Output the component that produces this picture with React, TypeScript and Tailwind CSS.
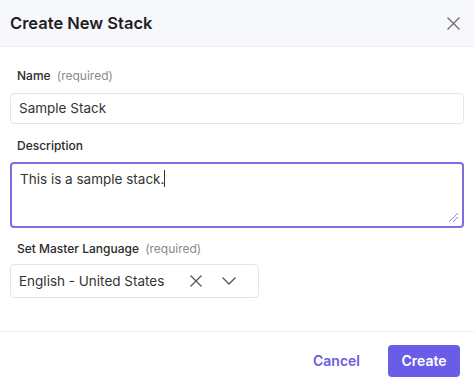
export default function App() {
  return (
    <div className="flex h-[389px] w-[474px] flex-col bg-white font-['Inter',sans-serif] text-[#222]">
      <header className="flex h-[47px] items-center justify-between border-b border-[#eef0f4] bg-[#f6f8fc] pl-[10px] pr-[14px]">
        <h1 className="text-[16.5px] font-semibold text-[#1f1f1f]">Create New Stack</h1>
        <svg className="h-[13px] w-[13px] text-[#6b6b6b]" viewBox="0 0 13 13" fill="none" stroke="currentColor" strokeWidth="1.3">
          <path d="M0.5 0.5 L12.5 12.5 M12.5 0.5 L0.5 12.5" />
        </svg>
      </header>

      <div className="flex flex-1 flex-col px-[10px] pt-[21px]">
        <label className="pl-[7px] text-[12px] leading-[16px] font-medium text-[#2a2a2a]">
          Name <span className="ml-[3px] font-normal text-[#8a8a8a]">(required)</span>
        </label>
        <div className="mt-[9px] flex h-[31px] items-center rounded-[4px] border border-[#e3e5ea] px-[8px] text-[13.5px] text-[#333]">
          Sample Stack
        </div>

        <label className="mt-[14px] pl-[7px] text-[12px] leading-[16px] font-medium text-[#2a2a2a]">Description</label>
        <div className="relative mt-[8px] h-[66px] rounded-[4px] border-2 border-[#7b6ee0] px-[8px] pt-[3px] text-[13.5px] leading-[20px] text-[#333]">
          This is a sample stack.<span className="inline-block h-[17px] w-px translate-y-[3px] bg-[#333]" />
          <svg className="absolute bottom-[4px] right-[4px] h-[10px] w-[10px]" viewBox="0 0 10 10" fill="none" stroke="#8b80e6" strokeWidth="1">
            <path d="M10 1 L1 10 M10 5 L5 10" />
          </svg>
        </div>

        <label className="mt-[13px] pl-[7px] text-[12px] leading-[16px] font-medium text-[#2a2a2a]">
          Set Master Language <span className="ml-[3px] font-normal text-[#8a8a8a]">(required)</span>
        </label>
        <div className="mt-[7px] flex h-[34px] w-[249px] items-center rounded-[4px] border border-[#e3e5ea] pl-[8px] text-[13.5px] text-[#333]">
          <span className="flex-1">English - United States</span>
          <svg className="mr-[20px] h-[12px] w-[12px] text-[#555]" viewBox="0 0 12 12" fill="none" stroke="currentColor" strokeWidth="1.3">
            <path d="M0.5 0.5 L11.5 11.5 M11.5 0.5 L0.5 11.5" />
          </svg>
          <svg className="mr-[22px] h-[8px] w-[14px] text-[#555]" viewBox="0 0 14 8" fill="none" stroke="currentColor" strokeWidth="1.3">
            <path d="M0.5 0.5 L7 7 L13.5 0.5" />
          </svg>
        </div>
      </div>

      <footer className="flex h-[58px] items-center justify-end gap-[28px] border-t border-[#eceef2] pr-[14px]">
        <button className="text-[14px] font-semibold text-[#6b5ce0]">Cancel</button>
        <button className="h-[32px] w-[72px] rounded-[4px] bg-[#6b5ce7] text-[14px] font-semibold text-white">Create</button>
      </footer>
    </div>
  );
}
